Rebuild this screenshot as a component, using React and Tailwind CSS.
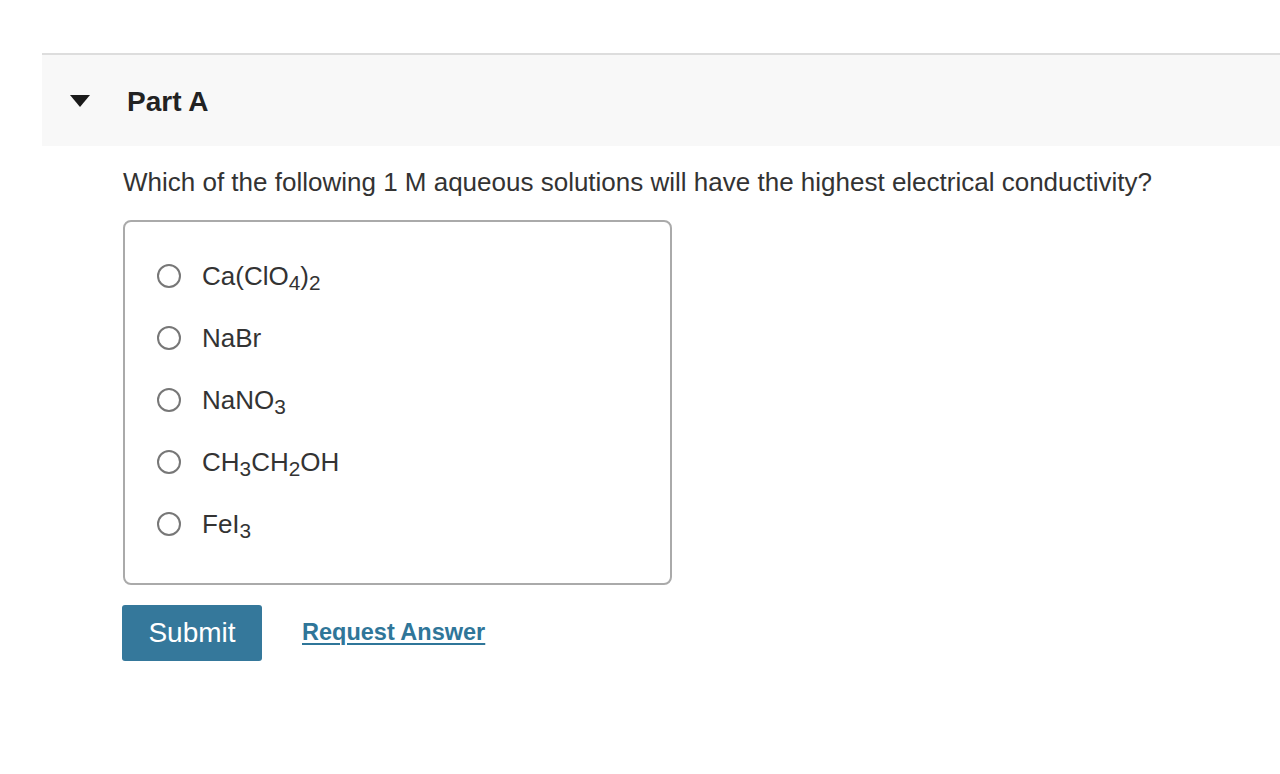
import React from 'react';

function Sub({ children }) {
  return <sub className="text-[0.8em] leading-none">{children}</sub>;
}

const options = [
  { id: 'a', label: <>Ca(ClO<Sub>4</Sub>)<Sub>2</Sub></> },
  { id: 'b', label: <>NaBr</> },
  { id: 'c', label: <>NaNO<Sub>3</Sub></> },
  { id: 'd', label: <>CH<Sub>3</Sub>CH<Sub>2</Sub>OH</> },
  { id: 'e', label: <>FeI<Sub>3</Sub></> },
];

function Radio() {
  return <span className="w-6 h-6 rounded-full border-2 border-[#777777] bg-white shrink-0" />;
}

export default function App() {
  return (
    <div className="min-h-screen bg-white pt-[53px] pl-[42px] text-[#333333] font-['Liberation_Sans',Arial,sans-serif]">
      <div className="border-t-2 border-[#dddddd] bg-[#f8f8f8] h-[93px] flex items-center">
        <svg width="20" height="12" viewBox="0 0 20 12" className="ml-[28px] mt-[1px]">
          <path d="M0 0 H20 L10 12 Z" fill="#1a1a1a" />
        </svg>
        <h2 className="ml-[37px] mt-[2px] text-[28px] font-bold text-[#222222]">Part A</h2>
      </div>

      <div className="pl-[81px]">
        <p className="mt-[20px] text-[26px] leading-[32px]">
          Which of the following 1 M aqueous solutions will have the highest electrical conductivity?
        </p>

        <div className="mt-[22px] w-[549px] h-[365px] border-2 border-[#aaaaaa] rounded-[8px] pl-[32px] pt-[38px]">
          <ul className="flex flex-col gap-[30px]">
            {options.map((o) => (
              <li key={o.id}>
                <label className="flex items-center gap-[21px] h-[32px] text-[26px] leading-[32px]">
                  <Radio />
                  <span className="h-[32px]">{o.label}</span>
                </label>
              </li>
            ))}
          </ul>
        </div>

        <div className="mt-[20px] flex items-center gap-[40px] -ml-[1px]">
          <button className="w-[140px] h-[56px] bg-[#35789b] text-white text-[28px] rounded-[3px]">
            Submit
          </button>
          <a href="#" className="text-[23.5px] font-bold text-[#2f7699] underline underline-offset-[3px] decoration-2">
            Request Answer
          </a>
        </div>
      </div>
    </div>
  );
}
